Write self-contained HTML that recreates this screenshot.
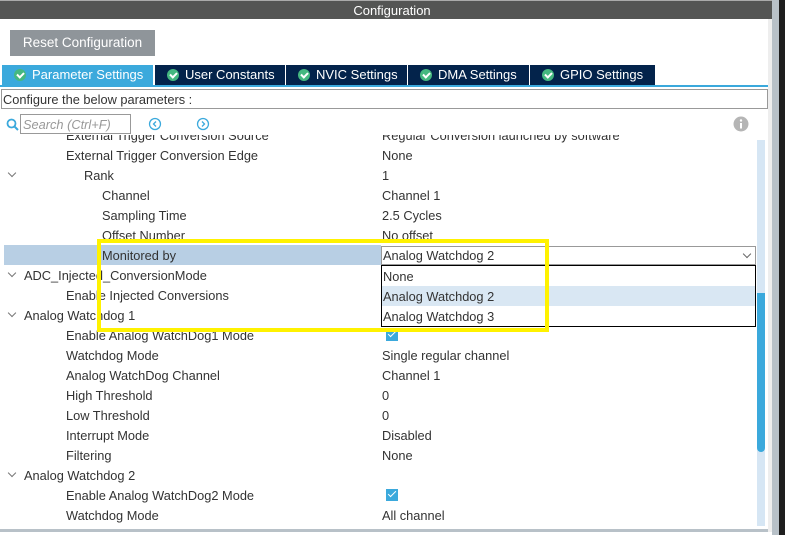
<!DOCTYPE html>
<html><head><style>
*{margin:0;padding:0;box-sizing:border-box}
body{width:785px;height:535px;overflow:hidden;background:#fff;font-family:"Liberation Sans",Arial,sans-serif;font-size:12.8px;color:#333;position:relative}
.a{position:absolute;white-space:nowrap}
.tab{position:absolute;top:65px;height:20px;background:#03234b;color:#fff;font-size:13px;line-height:20px;padding-left:30px}
.tab i{position:absolute;left:12px;top:4px;width:12px;height:12px;border-radius:50%;background:#45b880}
.tab i:after{content:"";position:absolute;left:3px;top:2.5px;width:5px;height:3px;border-left:2px solid #fff;border-bottom:2px solid #fff;transform:rotate(-45deg)}
.r{position:absolute;left:0;width:757px;height:20px;line-height:21px}
.chev{position:absolute;width:6px;height:6px;border-right:1px solid #777;border-bottom:1px solid #777;transform:rotate(45deg)}
.cb{position:absolute;width:12px;height:12px;background:#3ba9dc}
.cb:after{content:"";position:absolute;left:2px;top:2px;width:7px;height:3px;border-left:1.5px solid #fff;border-bottom:1.5px solid #fff;transform:rotate(-45deg)}
</style></head><body>
<div class="a" style="left:0;top:0;width:772px;height:19px;background:#545554;border-top:1px solid #aaa;color:#fff;font-size:13px;line-height:19px;text-align:center;padding-left:12px">Configuration</div>
<div class="a" style="left:10px;top:30px;width:145px;height:26px;background:#8f959a;color:#fff;font-size:13.5px;line-height:26px;text-align:center">Reset Configuration</div>
<div class="tab" style="left:2px;width:151px;background:#3ba9dc">Parameter Settings<i></i></div>
<div class="tab" style="left:155px;width:130px">User Constants<i></i></div>
<div class="tab" style="left:286px;width:121px">NVIC Settings<i></i></div>
<div class="tab" style="left:408px;width:121px">DMA Settings<i></i></div>
<div class="tab" style="left:530px;width:125px">GPIO Settings<i></i></div>
<div class="a" style="left:0;top:85px;width:768px;height:2px;background:#3ba9dc"></div>
<div class="a" style="left:1px;top:89px;width:767px;height:20px;border:1px solid #999;line-height:19px;padding-left:1px">Configure the below parameters :</div>
<svg class="a" style="left:6px;top:118px" width="14" height="14"><circle cx="5.5" cy="5.5" r="4" fill="none" stroke="#3ba9dc" stroke-width="1.8"/><line x1="8.5" y1="8.5" x2="12" y2="12" stroke="#3ba9dc" stroke-width="2"/></svg>
<div class="a" style="left:20px;top:114px;width:111px;height:20px;border:1px solid #999;color:#999;font-style:italic;line-height:19px;padding-left:2px;font-size:12.8px">Search (Ctrl+F)</div>
<svg class="a" style="left:148px;top:117px" width="14" height="14"><circle cx="7" cy="7" r="5.5" fill="none" stroke="#3ba9dc" stroke-width="1.3"/><path d="M8 4.5 L5.5 7 L8 9.5" fill="none" stroke="#3ba9dc" stroke-width="1.3"/></svg>
<svg class="a" style="left:196px;top:117px" width="14" height="14"><circle cx="7" cy="7" r="5.5" fill="none" stroke="#3ba9dc" stroke-width="1.3"/><path d="M6 4.5 L8.5 7 L6 9.5" fill="none" stroke="#3ba9dc" stroke-width="1.3"/></svg>
<svg class="a" style="left:733px;top:116px" width="16" height="16"><circle cx="8" cy="8" r="7.5" fill="#b5b5b5"/><rect x="7" y="7" width="2" height="5.5" fill="#fff"/><circle cx="8" cy="4.5" r="1.2" fill="#fff"/></svg>
<div class="a" style="left:0;top:135px;width:757px;height:394px;overflow:hidden">
<div class="r" style="top:-10px"><span class="a" style="left:66px">External Trigger Conversion Source</span><span class="a" style="left:382px">Regular Conversion launched by software</span></div>
<div class="r" style="top:10px"><span class="a" style="left:66px">External Trigger Conversion Edge</span><span class="a" style="left:382px">None</span></div>
<div class="r" style="top:30px"><i class="chev" style="left:9px;top:5px"></i><span class="a" style="left:84px">Rank</span><span class="a" style="left:382px">1</span></div>
<div class="r" style="top:50px"><span class="a" style="left:102px">Channel</span><span class="a" style="left:382px">Channel 1</span></div>
<div class="r" style="top:70px"><span class="a" style="left:102px">Sampling Time</span><span class="a" style="left:382px">2.5 Cycles</span></div>
<div class="r" style="top:90px"><span class="a" style="left:102px">Offset Number</span><span class="a" style="left:382px">No offset</span></div>
<div class="r" style="top:110px;background:#b8cfe4;left:4px;width:377px"><span class="a" style="left:98px">Monitored by</span></div>
<div class="r" style="top:130px"><i class="chev" style="left:9px;top:5px"></i><span class="a" style="left:24px">ADC_Injected_ConversionMode</span></div>
<div class="r" style="top:150px"><span class="a" style="left:66px">Enable Injected Conversions</span></div>
<div class="r" style="top:170px"><i class="chev" style="left:9px;top:5px"></i><span class="a" style="left:24px">Analog Watchdog 1</span></div>
<div class="r" style="top:190px"><span class="a" style="left:66px">Enable Analog WatchDog1 Mode</span><i class="cb" style="left:386px;top:4px"></i></div>
<div class="r" style="top:210px"><span class="a" style="left:66px">Watchdog Mode</span><span class="a" style="left:382px">Single regular channel</span></div>
<div class="r" style="top:230px"><span class="a" style="left:66px">Analog WatchDog Channel</span><span class="a" style="left:382px">Channel 1</span></div>
<div class="r" style="top:250px"><span class="a" style="left:66px">High Threshold</span><span class="a" style="left:382px">0</span></div>
<div class="r" style="top:270px"><span class="a" style="left:66px">Low Threshold</span><span class="a" style="left:382px">0</span></div>
<div class="r" style="top:290px"><span class="a" style="left:66px">Interrupt Mode</span><span class="a" style="left:382px">Disabled</span></div>
<div class="r" style="top:310px"><span class="a" style="left:66px">Filtering</span><span class="a" style="left:382px">None</span></div>
<div class="r" style="top:330px"><i class="chev" style="left:9px;top:5px"></i><span class="a" style="left:24px">Analog Watchdog 2</span></div>
<div class="r" style="top:350px"><span class="a" style="left:66px">Enable Analog WatchDog2 Mode</span><i class="cb" style="left:386px;top:4px"></i></div>
<div class="r" style="top:370px"><span class="a" style="left:66px">Watchdog Mode</span><span class="a" style="left:382px">All channel</span></div>
</div>
<div class="a" style="left:381px;top:246px;width:375px;height:19px;border:1px solid #999;background:#fff;line-height:18px;padding-left:1px">Analog Watchdog 2<i class="chev" style="left:362px;top:4px;border-color:#666"></i></div>
<div class="a" style="left:381px;top:265px;width:375px;height:62px;border:1px solid #000;background:#fff">
<div style="height:20px;line-height:21px;padding-left:1px">None</div>
<div style="height:20px;line-height:21px;padding-left:1px;background:#d9e7f3">Analog Watchdog 2</div>
<div style="height:20px;line-height:21px;padding-left:1px">Analog Watchdog 3</div>
</div>
<div class="a" style="left:97px;top:239px;width:452px;height:93px;border:4px solid #fff200"></div>
<div class="a" style="left:757px;top:140px;width:8px;height:386px;background:#d6e6f4"></div>
<div class="a" style="left:757px;top:293px;width:8px;height:159px;background:#3ba9dc;border-radius:0 0 4px 4px"></div>
<div class="a" style="left:0;top:529px;width:772px;height:3px;background:#b8c1c8"></div>
<div class="a" style="left:768px;top:19px;width:4px;height:513px;background:#eee"></div>
<div class="a" style="left:772px;top:0;width:7px;height:535px;background:#b8c1c8"></div>
<div class="a" style="left:779px;top:0;width:6px;height:535px;background:#1e1e1e"></div>
</body></html>
